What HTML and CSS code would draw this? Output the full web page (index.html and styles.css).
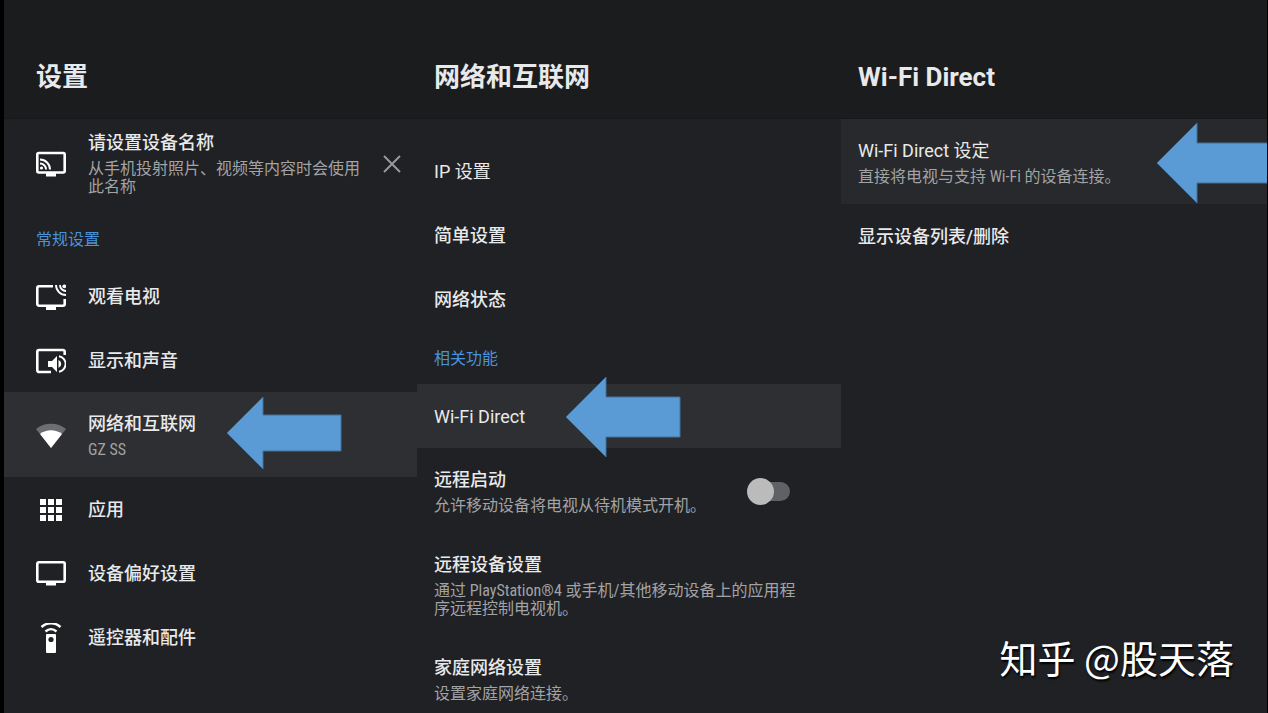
FILE: index.html
```html
<!DOCTYPE html>
<html lang="zh-CN">
<head>
    <meta charset="UTF-8">
    <title>设置</title>
    <link rel="stylesheet" href="styles.css">
</head>
<body>
    <div id="container">
        <section class="panel">
            <h1>设置</h1>
            <div class="row suggestion">
                <svg class="icon" viewBox="0 0 30 30">
                    <rect x="1.300" y="4" width="27.400" height="19.500" rx="1.500" fill="none" stroke="#fff" stroke-width="2.600"/>
                    <path d="M10 24h10v3.500H10z" fill="#fff"/>
                    <circle cx="5.500" cy="19" r="1.600" fill="#fff"/>
                    <path d="M4 14.500a6 6 0 0 1 6 6M4 10.500a10 10 0 0 1 10 10" fill="none" stroke="#fff" stroke-width="2"/>
                </svg>
                <div class="text">
                    <p class="title">请设置设备名称</p>
                    <p class="summary">从手机投射照片、视频等内容时会使用<br>此名称</p>
                </div>
                <button class="close" aria-label="关闭">
                    <svg viewBox="0 0 18 18"><path d="M1 1l16 16M17 1L1 17" fill="none" stroke="#98999b" stroke-width="2"/></svg>
                </button>
            </div>
            <h2>常规设置</h2>
            <a class="row" href="#">
                <svg class="icon" viewBox="0 0 30 30">
                    <path d="M17 4.300H3A1.700 1.700 0 0 0 1.300 6v16A1.700 1.700 0 0 0 3 23.700h24a1.700 1.700 0 0 0 1.700-1.700v-5" fill="none" stroke="#fff" stroke-width="2.600"/>
                    <path d="M10 24h10v4H10z" fill="#fff"/>
                    <circle cx="28.300" cy="4.300" r="1.900" fill="#fff"/>
                    <path d="M24 3a6 6 0 0 0 6 6M20 3a10 10 0 0 0 10 10" fill="none" stroke="#fff" stroke-width="1.900"/>
                </svg>
                <div class="text"><p class="title">观看电视</p></div>
            </a>
            <a class="row" href="#">
                <svg class="icon" viewBox="0 0 30 30">
                    <path d="M15 26H3a1.700 1.700 0 0 1-1.700-1.700V5.700A1.700 1.700 0 0 1 3 4h24a1.700 1.700 0 0 1 1.700 1.700V9" fill="none" stroke="#fff" stroke-width="2.600"/>
                    <path d="M12 15h4l5-5v16l-5-5h-4z" fill="#fff"/>
                    <path d="M22.500 14a4.300 4.300 0 0 1 0 8z" fill="#fff"/>
                    <path d="M23 10.300a7.800 7.800 0 0 1 0 15.400" fill="none" stroke="#fff" stroke-width="1.900"/>
                </svg>
                <div class="text"><p class="title">显示和声音</p></div>
            </a>
            <a class="row selected" href="#">
                <svg class="icon" viewBox="0 0 30 30">
                    <path d="M0 8C8 1 22 1 30 8L15 27z" fill="#6d6e70"/>
                    <path d="M4 13C10.500 8 19.500 8 26 13L15 27z" fill="#fff"/>
                </svg>
                <div class="text">
                    <p class="title">网络和互联网</p>
                    <p class="summary">GZ SS</p>
                </div>
                <svg class="arrow arrow-network" viewBox="0 0 116 74"><path d="M1 37L37 1v18h78v36H37v18z"/></svg>
            </a>
            <a class="row" href="#">
                <svg class="icon" viewBox="0 0 30 30">
                    <path d="M4 4h6v6H4zM12 4h6v6h-6zM20 4h6v6h-6zM4 12h6v6H4zM12 12h6v6h-6zM20 12h6v6h-6zM4 20h6v6H4zM12 20h6v6h-6zM20 20h6v6h-6z" fill="#fff"/>
                </svg>
                <div class="text"><p class="title">应用</p></div>
            </a>
            <a class="row" href="#">
                <svg class="icon" viewBox="0 0 30 30">
                    <rect x="1.300" y="3.300" width="27.400" height="19.500" rx="1.500" fill="none" stroke="#fff" stroke-width="2.600"/>
                    <path d="M10 23h10v3.500H10z" fill="#fff"/>
                </svg>
                <div class="text"><p class="title">设备偏好设置</p></div>
            </a>
            <a class="row" href="#">
                <svg class="icon" viewBox="0 0 30 30">
                    <path d="M5.500 4C11-1 19-1 24.500 4M9.500 8.500c3.300-3 7.700-3 11 0" fill="none" stroke="#fff" stroke-width="2.400"/>
                    <path d="M11 11h8a1 1 0 0 1 1 1v17a1 1 0 0 1-1 1h-8a1 1 0 0 1-1-1V12a1 1 0 0 1 1-1z" fill="#fff"/>
                    <circle cx="15" cy="16.500" r="2.600" fill="#202124"/>
                </svg>
                <div class="text"><p class="title">遥控器和配件</p></div>
            </a>
        </section>

        <section class="panel sub-panel">
            <h1>网络和互联网</h1>
            <nav class="network-list">
                <a class="row" href="#"><div class="text"><p class="title latin">IP 设置</p></div></a>
                <a class="row" href="#"><div class="text"><p class="title">简单设置</p></div></a>
                <a class="row" href="#"><div class="text"><p class="title">网络状态</p></div></a>
                <h2>相关功能</h2>
                <a class="row selected" href="#">
                    <div class="text"><p class="title latin">Wi-Fi Direct</p></div>
                    <svg class="arrow arrow-direct" viewBox="0 0 116 82"><path d="M1 41L41 1v20h74v40H41v20z"/></svg>
                </a>
                <div class="row">
                    <label class="text" for="remote-start">
                        <span class="title">远程启动</span>
                        <span class="summary">允许移动设备将电视从待机模式开机。</span>
                    </label>
                    <input type="checkbox" id="remote-start" class="switch">
                </div>
                <a class="row" href="#">
                    <div class="text">
                        <p class="title">远程设备设置</p>
                        <p class="summary">通过 PlayStation®4 或手机/其他移动设备上的应用程<br>序远程控制电视机。</p>
                    </div>
                </a>
                <a class="row" href="#">
                    <div class="text">
                        <p class="title">家庭网络设置</p>
                        <p class="summary">设置家庭网络连接。</p>
                    </div>
                </a>
            </nav>
        </section>

        <section class="panel sub-panel">
            <h1>Wi-Fi Direct</h1>
            <a class="row preview" href="#">
                <div class="text">
                    <p class="title latin">Wi-Fi Direct 设定</p>
                    <p class="summary">直接将电视与支持 Wi-Fi 的设备连接。</p>
                </div>
                <svg class="arrow arrow-setup" viewBox="0 0 110 82"><path d="M0 41L40 1v20h72v40H40v20z"/></svg>
            </a>
            <a class="row" href="#"><div class="text"><p class="title">显示设备列表/删除</p></div></a>
        </section>
    </div>

    <div id="watermark">知乎 @股天落</div>
</body>
</html>
```
FILE: styles.css
```css
* {
    box-sizing: border-box;
}

body {
    margin: 0;
    background-color: #000;
    color: #e8e9eb;
    font-family: Roboto, "Noto Sans CJK SC", sans-serif;
}

h1, h2, p {
    margin: 0;
}

#container {
    display: grid;
    grid-template-columns: 413fr 424fr 426fr;
    height: 100vh;
    padding: 0 1px 0 4px;
    overflow: hidden;
}

.panel {
    background-color: #202124;
    min-width: 0;
}

h1 {
    height: 119px;
    padding: 58px 32px 0;
    background-color: #1b1c1e;
    border-bottom: 1px solid #17181a;
    font-size: 26px;
    line-height: 38px;
    font-weight: 700;
}

h2 {
    height: 52px;
    padding: 16px 32px 0;
    color: #4a92dc;
    font-size: 16px;
    line-height: 24px;
    font-weight: 400;
}

.row {
    position: relative;
    display: flex;
    align-items: center;
    min-height: 64px;
    padding: 20px 16px 18px 32px;
    color: inherit;
    text-decoration: none;
}

.sub-panel h1, .sub-panel h2, .sub-panel .row {
    padding-left: 17px;
}

.network-list {
    padding-top: 20px;
}

.network-list h2 {
    height: 53px;
}

.suggestion {
    padding-top: 12px;
    padding-bottom: 16px;
}

.selected {
    background-color: #2e2f32;
}

.preview {
    background-color: #28292c;
}

.icon {
    flex: none;
    width: 30px;
    height: 30px;
    margin: -4px 22px -4px 0;
}

.text {
    flex: 1;
    white-space: nowrap;
}

.title {
    display: block;
    font-size: 18px;
    line-height: 24px;
    font-weight: 500;
}

.latin {
    font-weight: 400;
}

.summary {
    display: block;
    margin-top: 5px;
    color: #a2a3a5;
    font-family: "Roboto Condensed", Roboto, "Noto Sans CJK SC", sans-serif;
    font-size: 16px;
    line-height: 18px;
}

.close {
    width: 18px;
    height: 18px;
    padding: 0;
    border: none;
    background: none;
    cursor: pointer;
}

.close svg {
    display: block;
}

.switch {
    appearance: none;
    position: relative;
    width: 43px;
    height: 27px;
    margin: 0 35px 0 0;
    cursor: pointer;
}

.switch::before {
    content: "";
    position: absolute;
    left: 12px;
    right: 0;
    top: 4px;
    bottom: 4px;
    border-radius: 10px;
    background-color: #606164;
}

.switch::after {
    content: "";
    position: absolute;
    left: 0;
    top: 0;
    width: 27px;
    height: 27px;
    border-radius: 50%;
    background-color: #bbbbbc;
}

.switch:checked::after {
    left: 16px;
}

/* 箭头标注 */
.arrow {
    position: absolute;
    z-index: 1;
    fill: #5b9bd5;
    stroke: #41719c;
    stroke-width: 1;
}

.arrow-network {
    left: 222px;
    top: 4px;
    width: 116px;
    height: 74px;
}

.arrow-direct {
    left: 148px;
    top: -8px;
    width: 116px;
    height: 82px;
}

.arrow-setup {
    right: 0;
    top: 3px;
    width: 110px;
    height: 82px;
}

#watermark {
    position: absolute;
    right: 34px;
    bottom: 28px;
    color: #fff;
    font-family: "Noto Sans CJK SC", sans-serif;
    font-size: 38px;
    line-height: 56px;
    text-shadow: 1px 2px 2px #000;
}
```
